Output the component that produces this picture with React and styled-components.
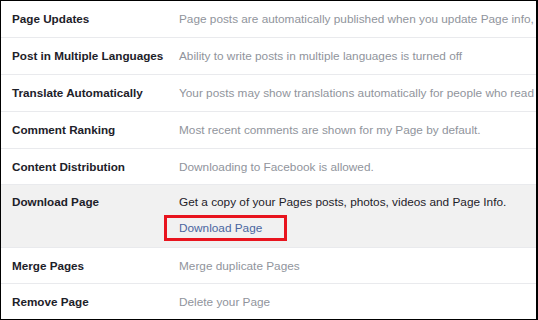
import React from 'react';
import styled, { createGlobalStyle } from 'styled-components';

const GlobalStyle = createGlobalStyle`
  html, body {
    margin: 0;
    padding: 0;
    background: #fff;
  }
  body {
    font-family: "Liberation Sans", Arial, Helvetica, sans-serif;
  }
`;

const Frame = styled.div`
  width: 538px;
  height: 320px;
  box-sizing: border-box;
  border: 1px solid #000;
  border-right-width: 2px;
  overflow: hidden;
  background: #fff;
`;

const Row = styled.div`
  display: grid;
  grid-template-columns: 167px 1fr;
  align-items: ${(p) => (p.expanded ? 'start' : 'center')};
  box-sizing: border-box;
  height: ${(p) => p.height}px;
  padding: ${(p) => (p.expanded ? '9px 0 0 11px' : '0 0 0 11px')};
  background: ${(p) => (p.expanded ? '#f1f1f1' : '#fff')};
  border-bottom: ${(p) => (p.last ? 'none' : '1px solid #e9eaed')};
`;

const Label = styled.div`
  font-size: 11.7px;
  line-height: 16px;
  font-weight: bold;
  color: #1d2129;
  white-space: nowrap;
`;

const Info = styled.div`
  min-width: 0;
  display: flex;
  flex-direction: column;
  align-items: flex-start;
`;

const Description = styled.div`
  font-size: 11.8px;
  line-height: 16px;
  color: ${(p) => (p.dark ? '#1d2129' : '#90949c')};
  white-space: nowrap;
`;

const HighlightLink = styled.a`
  display: block;
  box-sizing: border-box;
  width: 123px;
  height: 26px;
  margin: 5px 0 0 -15px;
  padding: 2px 0 0 12px;
  border: 3px solid #e8141e;
  font-size: 11.8px;
  line-height: 16px;
  color: #4a66a0;
  text-decoration: none;
  white-space: nowrap;
`;

const settings = [
  { label: 'Page Updates', text: 'Page posts are automatically published when you update Page info,', height: 37 },
  { label: 'Post in Multiple Languages', text: 'Ability to write posts in multiple languages is turned off', height: 37 },
  { label: 'Translate Automatically', text: 'Your posts may show translations automatically for people who read', height: 37 },
  { label: 'Comment Ranking', text: 'Most recent comments are shown for my Page by default.', height: 37 },
  { label: 'Content Distribution', text: 'Downloading to Facebook is allowed.', height: 36 },
  { label: 'Download Page', text: 'Get a copy of your Pages posts, photos, videos and Page Info.', height: 63, expanded: true },
  { label: 'Merge Pages', text: 'Merge duplicate Pages', height: 36 },
  { label: 'Remove Page', text: 'Delete your Page', height: 35, last: true },
];

export default function App() {
  return (
    <>
      <GlobalStyle />
      <Frame>
        {settings.map((s) => (
          <Row key={s.label} height={s.height} expanded={s.expanded} last={s.last}>
            <Label>{s.label}</Label>
            <Info>
              <Description dark={s.expanded}>{s.text}</Description>
              {s.expanded && <HighlightLink href="#">Download Page</HighlightLink>}
            </Info>
          </Row>
        ))}
      </Frame>
    </>
  );
}
